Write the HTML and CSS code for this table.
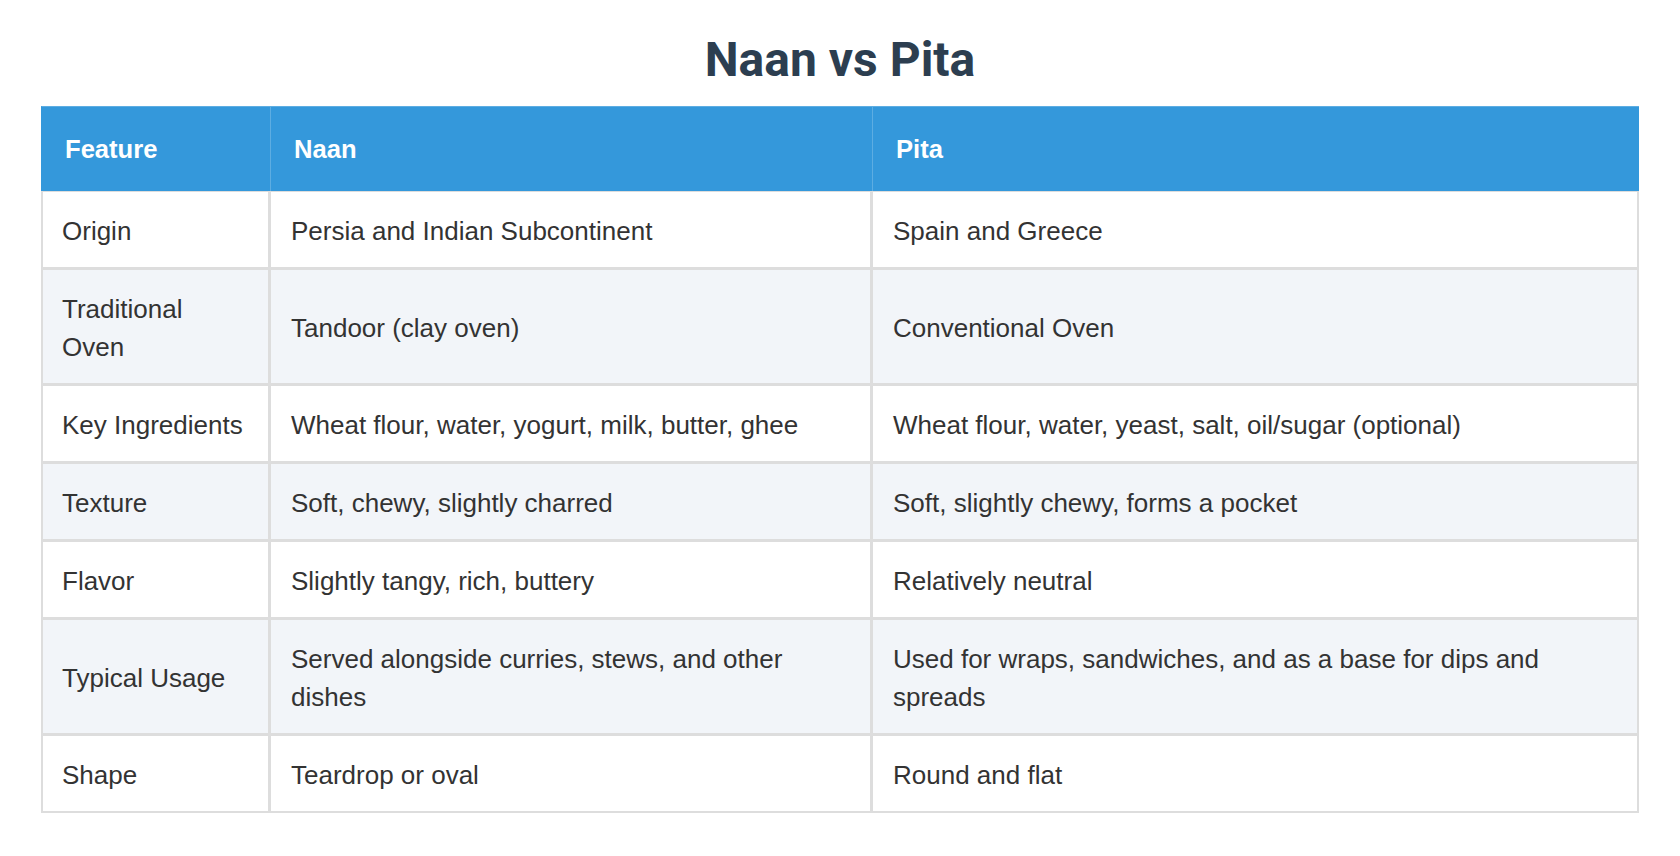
FILE: index.html
```html
<!DOCTYPE html>
<html lang="en">
<head>
<meta charset="utf-8">
<title>Naan vs Pita</title>
<link rel="stylesheet" href="styles.css">
</head>
<body>
<main class="page">
  <h1 class="title">Naan vs Pita</h1>
  <table class="compare">
    <colgroup>
      <col class="col-feature">
      <col class="col-naan">
      <col class="col-pita">
    </colgroup>
    <thead>
      <tr>
        <th>Feature</th>
        <th>Naan</th>
        <th>Pita</th>
      </tr>
    </thead>
    <tbody>
      <tr>
        <td>Origin</td>
        <td>Persia and Indian Subcontinent</td>
        <td>Spain and Greece</td>
      </tr>
      <tr>
        <td>Traditional Oven</td>
        <td>Tandoor (clay oven)</td>
        <td>Conventional Oven</td>
      </tr>
      <tr>
        <td>Key Ingredients</td>
        <td>Wheat flour, water, yogurt, milk, butter, ghee</td>
        <td>Wheat flour, water, yeast, salt, oil/sugar (optional)</td>
      </tr>
      <tr>
        <td>Texture</td>
        <td>Soft, chewy, slightly charred</td>
        <td>Soft, slightly chewy, forms a pocket</td>
      </tr>
      <tr>
        <td>Flavor</td>
        <td>Slightly tangy, rich, buttery</td>
        <td>Relatively neutral</td>
      </tr>
      <tr>
        <td>Typical Usage</td>
        <td>Served alongside curries, stews, and other dishes</td>
        <td>Used for wraps, sandwiches, and as a base for dips and spreads</td>
      </tr>
      <tr>
        <td>Shape</td>
        <td>Teardrop or oval</td>
        <td>Round and flat</td>
      </tr>
    </tbody>
  </table>
</main>
</body>
</html>
```

FILE: styles.css
```css
html, body {
  margin: 0;
  padding: 0;
  background: #ffffff;
}

.page {
  padding: 32px 41px 40px;
  font-family: "Liberation Sans", Arial, sans-serif;
  color: #333333;
}

.title {
  margin: 0 0 18px;
  font-family: Roboto, "Liberation Sans", sans-serif;
  font-weight: 700;
  font-size: 48px;
  line-height: 56px;
  text-align: center;
  color: #2c3e50;
}

.compare {
  width: 1598px;
  table-layout: fixed;
  border-collapse: separate;
  border-spacing: 0;
  font-size: 26px;
  line-height: 38px;
}

.col-feature { width: 229px; }
.col-naan { width: 602px; }
.col-pita { width: 767px; }

.compare th {
  background: #3498db;
  color: #ffffff;
  font-weight: 700;
  font-size: 25.6px;
  text-align: left;
  padding: 23px 20px 23px 23px;
  border-top: 1px solid #5dade2;
  border-left: 1px solid #5dade2;
}

.compare th:first-child {
  border-left: 1px solid #3498db;
}

.compare td {
  padding: 19.5px 20px 17.5px 20px;
  border-style: solid;
  border-color: #dddddd;
  border-width: 1px 2px 2px 1px;
  vertical-align: middle;
}

.compare td:first-child {
  border-left-width: 2px;
  padding-left: 19px;
  padding-right: 21px;
}

.compare tbody tr:nth-child(even) td {
  background: #f2f5f9;
}
```
